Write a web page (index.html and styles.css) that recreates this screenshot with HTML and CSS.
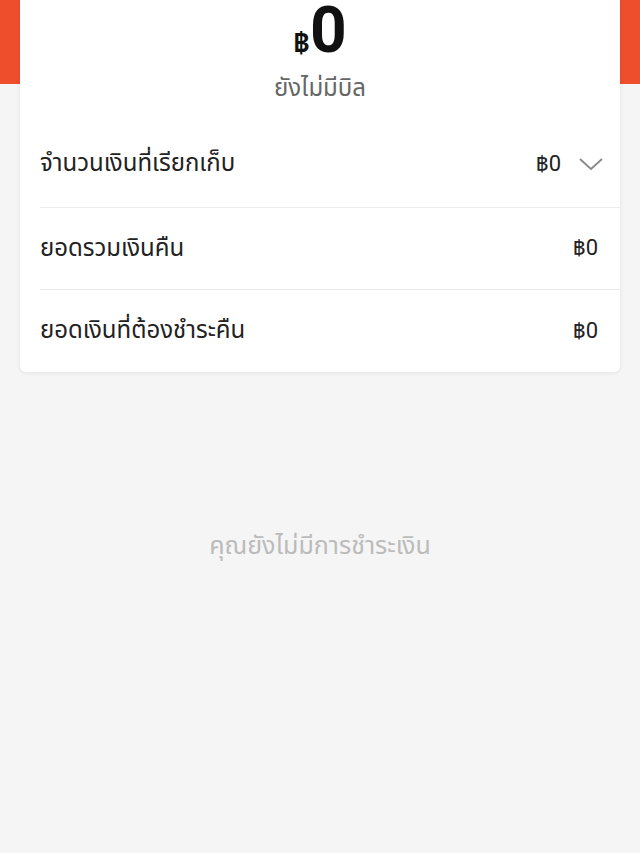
FILE: index.html
```html
<!DOCTYPE html>
<html lang="th">
<head>
    <meta charset="UTF-8">
    <meta name="viewport" content="width=device-width, initial-scale=1.0">
    <title>บิล</title>
    <link rel="stylesheet" href="styles.css">
</head>
<body>
    <!-- แถบสีส้มด้านบน -->
    <div class="top-band"></div>

    <!-- การ์ดสรุปยอด -->
    <div class="summary">
        <div class="summary-head">
            <div class="total"><span class="total-sign">฿</span>0</div>
            <div class="total-note">ยังไม่มีบิล</div>
        </div>
        <div class="row row-first">
            <span class="row-label">จำนวนเงินที่เรียกเก็บ</span>
            <span class="row-value">฿0
                <svg class="chevron" width="24" height="14" viewBox="0 0 24 14">
                    <polyline points="1,2 12,12 23,2" fill="none" stroke="#888" stroke-width="1.8"/>
                </svg>
            </span>
        </div>
        <div class="row">
            <span class="row-label">ยอดรวมเงินคืน</span>
            <span class="row-value">฿0</span>
        </div>
        <div class="row">
            <span class="row-label">ยอดเงินที่ต้องชำระคืน</span>
            <span class="row-value">฿0</span>
        </div>
    </div>

    <div class="empty">คุณยังไม่มีการชำระเงิน</div>
</body>
</html>
```

FILE: styles.css
```css
*{
    margin: 0;
    padding: 0;
    box-sizing: border-box;
}
body{
    background-color: #f5f5f5;
    font-family: Roboto, "Noto Sans Thai", sans-serif;
    color: #222;
}
.top-band{
    height: 84px;
    background-color: #ef4e2c;
}
/* การ์ดเลื่อนขึ้นไปทับแถบสีส้ม */
.summary{
    margin: -104px 20px 0;
    background-color: #fff;
    border-radius: 6px;
    box-shadow: 0 1px 4px rgba(0, 0, 0, 0.08);
    padding-top: 27px;
}
.summary-head{
    height: 117px;
    display: flex;
    flex-direction: column;
    align-items: center;
}
.total{
    font-size: 64px;
    font-weight: bold;
    line-height: 48px;
    color: #111;
}
.total-sign{
    font-size: 29px;
}
.total-note{
    font-size: 24px;
    color: #666;
    line-height: 30px;
    margin-top: 7px;
}
.row{
    height: 82px;
    margin-left: 20px;
    padding-right: 22px;
    display: flex;
    align-items: center;
    justify-content: space-between;
    font-size: 22px;
    border-bottom: 1px solid #ececec;
}
.row-first{
    height: 84px;
    padding-bottom: 3px;
}
.row:last-child{
    border-bottom: none;
}
.row-label{
    font-size: 24px;
}
.row-value{
    display: flex;
    align-items: center;
}
.chevron{
    margin-left: 18px;
    margin-right: -5px;
}
.empty{
    margin-top: 155px;
    text-align: center;
    font-size: 25px;
    color: #bbb;
}
```
